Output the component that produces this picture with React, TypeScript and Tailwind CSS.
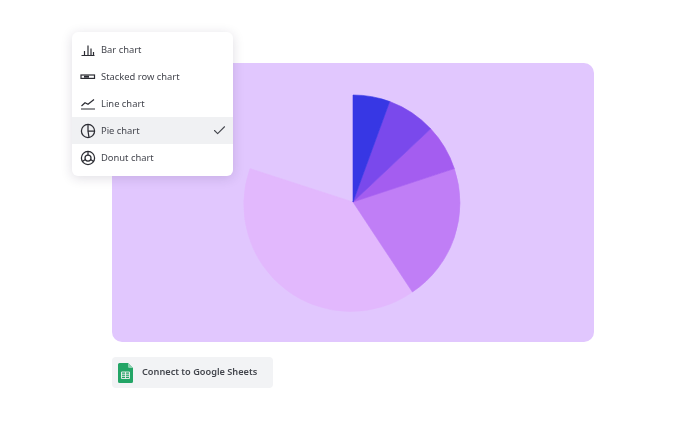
import React from 'react';
import { Check } from 'lucide-react';

const BarIcon = () => (
  <svg width="16" height="14" viewBox="0 0 16 14" fill="none" stroke="#2b2c33" strokeWidth="1.2">
    <path d="M1.5 12.5h13M4.5 12V8M8 12V2.5M11 12V5.5M13.5 12V9" />
  </svg>
);

const RowIcon = () => (
  <svg width="16" height="14" viewBox="0 0 16 14" fill="none" stroke="#2b2c33" strokeWidth="1.2">
    <rect x="1" y="5" width="13.5" height="3.4" />
    <path d="M4 6.7h5" strokeWidth="2" />
  </svg>
);

const LineIcon = () => (
  <svg width="16" height="14" viewBox="0 0 16 14" fill="none" stroke="#2b2c33" strokeWidth="1.2">
    <path d="M1.5 9 5 5.8l3 1.4 6-4.7M1 12h14" />
  </svg>
);

const PieIcon = () => (
  <svg width="16" height="16" viewBox="0 0 16 16" fill="none" stroke="#2b2c33" strokeWidth="1.25">
    <circle cx="8" cy="8" r="6.6" />
    <path d="M8 1.4V8h6.6M8 8l1 6.5" />
  </svg>
);

const DonutIcon = () => (
  <svg width="16" height="16" viewBox="0 0 16 16" fill="none" stroke="#2b2c33" strokeWidth="1.25">
    <circle cx="8" cy="8" r="6.6" />
    <circle cx="8" cy="8" r="3" />
    <path d="M8 1.4V5M10.6 9.5l3 2M5.4 9.5l-3 2" />
  </svg>
);

const SheetsIcon = () => (
  <svg width="15" height="20" viewBox="0 0 15 20">
    <path d="M1.5 0H10l5 5v13.5a1.5 1.5 0 0 1-1.5 1.5h-12A1.5 1.5 0 0 1 0 18.5v-17A1.5 1.5 0 0 1 1.5 0z" fill="#23a566" />
    <path d="M10 0l5 5h-3.5A1.5 1.5 0 0 1 10 3.5z" fill="#8ed1b1" />
    <path d="M3.5 9h8v6.5h-8zM3.5 11.2h8M3.5 13.3h8M7.5 9v6.5" fill="none" stroke="#f1f1f1" strokeWidth="0.9" />
  </svg>
);

const items = [
  { label: 'Bar chart', icon: <BarIcon /> },
  { label: 'Stacked row chart', icon: <RowIcon /> },
  { label: 'Line chart', icon: <LineIcon /> },
  { label: 'Pie chart', icon: <PieIcon />, active: true },
  { label: 'Donut chart', icon: <DonutIcon /> },
];

const PieChart = () => (
  <svg width="224" height="224" viewBox="0 0 224 224">
    <g transform="translate(112 112) translate(-353.3 -201.7)" strokeWidth="0.6">
      <path d="M353.3 201.7 412.7 291.7A107 107 0 0 1 250.3 168.3z" fill="#e2b8fd" stroke="#e2b8fd" />
      <path d="M353.3 201.7 454.6 168.3A107 107 0 0 1 412.7 291.7z" fill="#c07ef6" stroke="#c07ef6" />
      <path d="M353.3 201.7 431 128.5A107 107 0 0 1 454.6 168.3z" fill="#a45df0" stroke="#a45df0" />
      <path d="M353.3 201.7 390 101.2A107 107 0 0 1 431 128.5z" fill="#7a49ec" stroke="#7a49ec" />
      <path d="M353.3 201.7V94.7A107 107 0 0 1 390 101.2z" fill="#3737e4" stroke="#3737e4" />
    </g>
  </svg>
);

export default function App() {
  return (
    <div className="relative w-[688px] h-[424px] bg-white overflow-hidden blur-[0.5px] font-['Noto_Sans','Open_Sans',sans-serif]">
      <div className="pl-[112px] pt-[63px]">
        <div className="w-[482px] h-[279px] rounded-[10px] bg-[#e1c7fe] flex justify-center pt-[27px]">
          <PieChart />
        </div>
        <div className="mt-[15px] w-[161px] h-[31px] rounded bg-[#f2f3f5] flex items-center pl-[6px] gap-[9px]">
          <SheetsIcon />
          <span className="whitespace-nowrap pb-[1px] text-[9.2px] font-semibold text-[#44474e]">Connect to Google Sheets</span>
        </div>
      </div>

      <div className="absolute left-[72px] top-[32px] w-[161px] h-[144px] rounded-md bg-white shadow-[0_2px_12px_rgba(40,30,70,0.15)] pt-[4px]">
        {items.map(item => (
          <div
            key={item.label}
            className={`h-[27px] flex items-center pl-[8px] pr-[6px] ${item.active ? 'bg-[#f0f1f3]' : ''}`}
          >
            <span className="w-[16px] flex justify-center">{item.icon}</span>
            <span className="ml-[5px] pt-[1px] text-[9.4px] text-[#44464e]">{item.label}</span>
            {item.active && <Check size={15} strokeWidth={1.7} className="ml-auto text-[#44464d]" />}
          </div>
        ))}
      </div>
    </div>
  );
}
